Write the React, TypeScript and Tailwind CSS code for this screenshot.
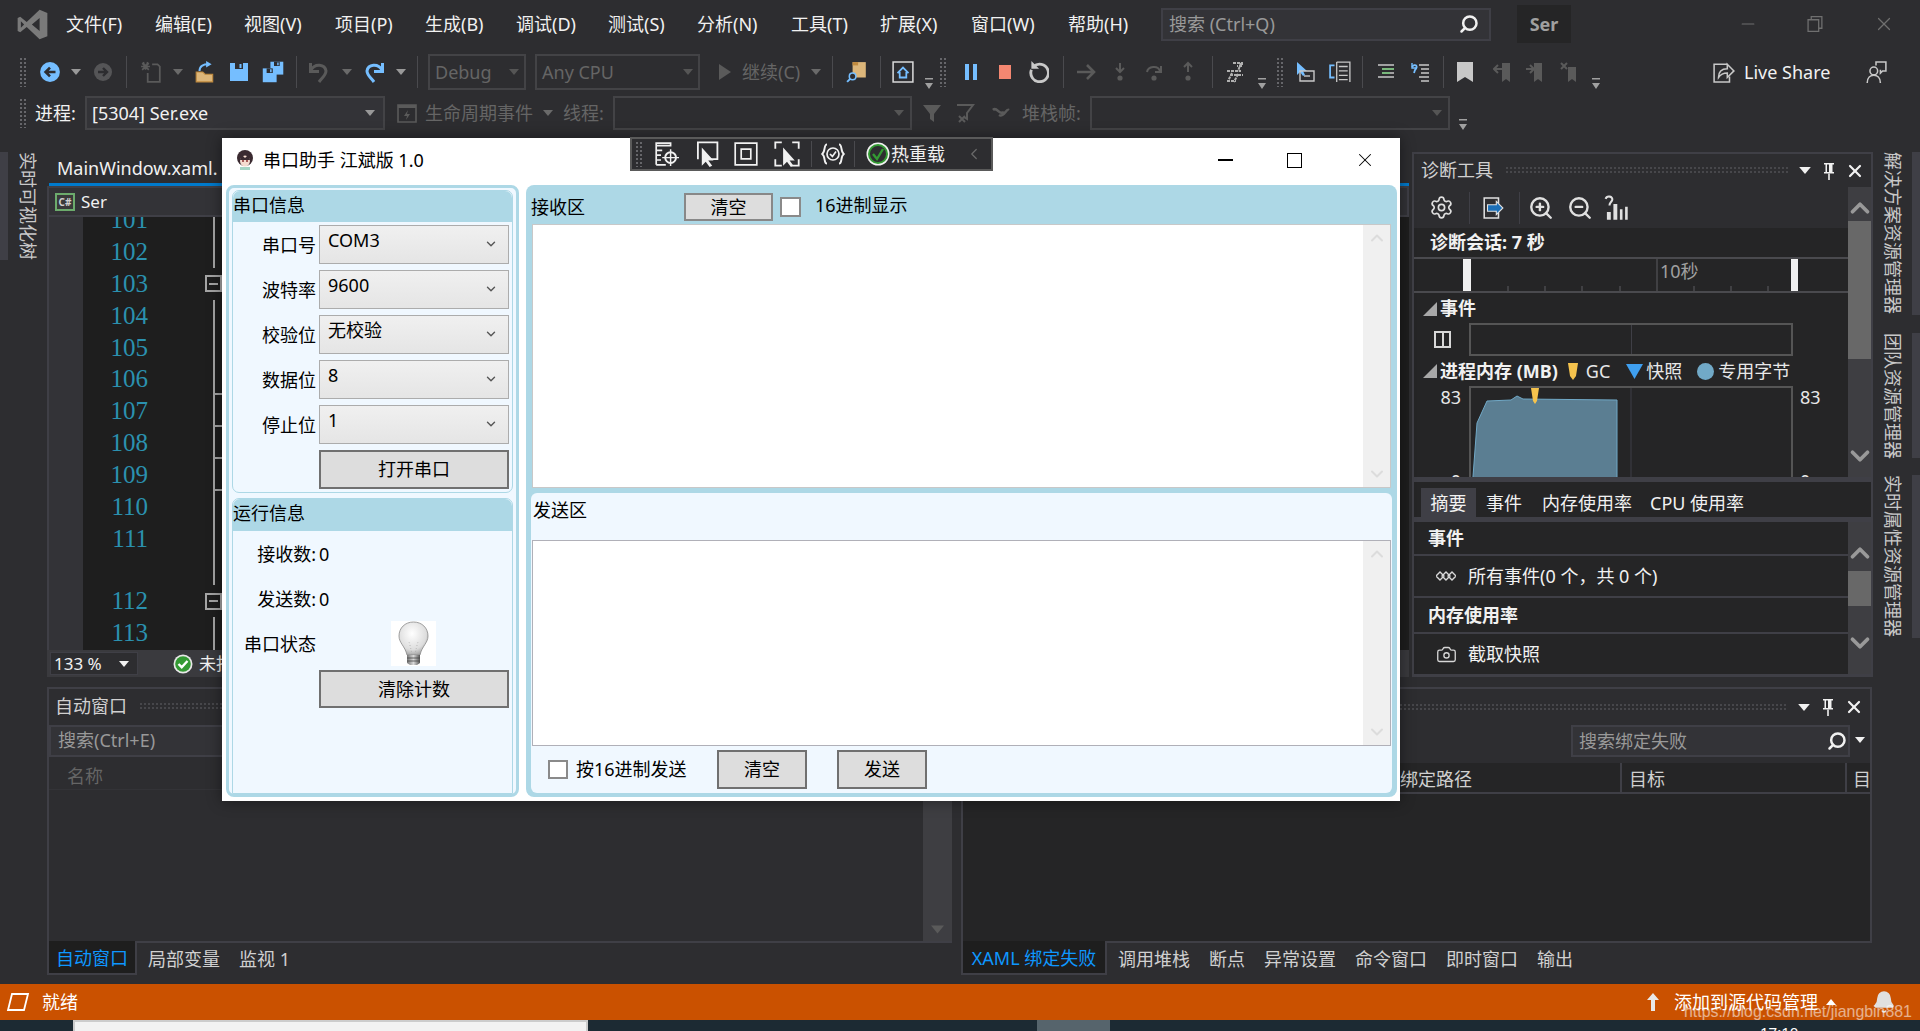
import type { ReactNode } from 'react';
import { Bell, Camera, ChevronDown, ChevronLeft, ChevronUp, Minus, Search, Settings, X, ZoomIn, ZoomOut } from 'lucide-react';

const MENUS = [
  { t: '文件(F)', w: 'w-[89px]' },
  { t: '编辑(E)', w: 'w-[89px]' },
  { t: '视图(V)', w: 'w-[91px]' },
  { t: '项目(P)', w: 'w-[90px]' },
  { t: '生成(B)', w: 'w-[91px]' },
  { t: '调试(D)', w: 'w-[92px]' },
  { t: '测试(S)', w: 'w-[89px]' },
  { t: '分析(N)', w: 'w-[94px]' },
  { t: '工具(T)', w: 'w-[89px]' },
  { t: '扩展(X)', w: 'w-[91px]' },
  { t: '窗口(W)', w: 'w-[97px]' },
  { t: '帮助(H)', w: 'w-[93px]' },
];

function Caret({ className = '', color = '#999999' }: { className?: string; color?: string }) {
  return (
    <svg viewBox="0 0 10 6" className={`w-[10px] h-[6px] shrink-0 ${className}`}>
      <path d="M0 0h10L5 6z" fill={color} />
    </svg>
  );
}

function Overflow({ className = '' }: { className?: string }) {
  return (
    <svg viewBox="0 0 8 13" className={`w-[8px] h-[13px] shrink-0 self-end mb-[6px] ${className}`}>
      <path d="M0 1h8v1.5H0zM0 6h8L4 12z" fill="#a0a0a0" />
    </svg>
  );
}

function Grip({ className = '', h = 'h-[30px]' }: { className?: string; h?: string }) {
  return <div className={`w-[8px] ${h} shrink-0 bg-[radial-gradient(#66666a_1px,transparent_1.2px)] bg-[length:4px_4px] ${className}`} />;
}

function Sep({ className = '' }: { className?: string }) {
  return <div className={`w-[1px] h-[32px] shrink-0 bg-[#4a4a4e] ${className}`} />;
}

function Ic({ w, children, className = '', vb = '0 0 20 20' }: { w: string; children: ReactNode; className?: string; vb?: string }) {
  return (
    <svg viewBox={vb} className={`${w} h-[22px] shrink-0 ${className}`}>
      {children}
    </svg>
  );
}

function Floppy({ x = 0, y = 0, s = 1 }: { x?: number; y?: number; s?: number }) {
  return (
    <g transform={`translate(${x} ${y}) scale(${s})`}>
      <path d="M1 1h18v18H1z" fill="#75beff" />
      <path d="M6 1h8v6H6z" fill="#2d2d30" />
      <path d="M10.5 2h2v4h-2z" fill="#75beff" />
    </g>
  );
}

function Toolbar1() {
  return (
    <div className="h-[48px] flex items-center">
      <Grip className="ml-[19px]" />
      <Ic w="w-[22px]" className="ml-[12px]">
        <circle cx="10" cy="10" r="9" fill="#75beff" />
        <path d="M15 10H7M10 6l-4 4 4 4" stroke="#2d2d30" strokeWidth="2.4" fill="none" />
      </Ic>
      <Caret className="ml-[10px]" />
      <Ic w="w-[20px]" className="ml-[12px]">
        <circle cx="10" cy="10" r="9" fill="#555557" />
        <path d="M5 10h8M10 6l4 4-4 4" stroke="#2d2d30" strokeWidth="2.4" fill="none" />
      </Ic>
      <Sep className="ml-[13px]" />
      <Ic w="w-[22px]" className="ml-[13px]">
        <path d="M3 1l1 3M7 1L6 4M1 5h8M5 3v5M2 2l6 6M8 2L2 8" stroke="#5a5a5a" strokeWidth="1.5" />
        <path d="M11 3h5l2 2v14H7v-8" stroke="#5a5a5a" strokeWidth="1.6" fill="none" />
      </Ic>
      <Caret className="ml-[11px]" color="#6a6a6a" />
      <Ic w="w-[22px]" className="ml-[11px]">
        <path d="M2 19V10h6l2 2h7v7z" fill="#dcb67a" stroke="#c08a3e" />
        <path d="M5 9c0-5 4-6 8-6" stroke="#75beff" strokeWidth="1.8" fill="none" />
        <path d="M11 0l5 3-5 3z" fill="#75beff" />
      </Ic>
      <Ic w="w-[20px]" className="ml-[13px]">
        <Floppy />
      </Ic>
      <Ic w="w-[22px]" className="ml-[13px]">
        <Floppy x={7} y={0} s={0.65} />
        <Floppy x={0} y={6} s={0.7} />
      </Ic>
      <Sep className="ml-[12px]" />
      <Ic w="w-[20px]" className="ml-[11px]">
        <path d="M2.500 1v8.500H11" stroke="#5a5a5a" strokeWidth="3" fill="none" />
        <path d="M3 8C7 1 17 2 18 9c0 4-4 7-7 11" stroke="#5a5a5a" strokeWidth="3" fill="none" />
      </Ic>
      <Caret className="ml-[14px]" color="#6a6a6a" />
      <Ic w="w-[20px]" className="ml-[13px]">
        <path d="M17.500 1v8.500H9" stroke="#75beff" strokeWidth="3" fill="none" />
        <path d="M17 8C13 1 3 2 2 9c0 4 4 7 7 11" stroke="#75beff" strokeWidth="3" fill="none" />
      </Ic>
      <Caret className="ml-[11px]" />
      <Sep className="ml-[11px]" />
      <div className="ml-[10px] w-[98px] h-[36px] shrink-0 border-2 border-[#434346] flex items-center justify-between px-[5px] text-[#656565]">
        <span>Debug</span>
        <Caret color="#555555" />
      </div>
      <div className="ml-[9px] w-[165px] h-[36px] shrink-0 border-2 border-[#434346] flex items-center justify-between px-[5px] text-[#656565]">
        <span>Any CPU</span>
        <Caret color="#555555" />
      </div>
      <Ic w="w-[14px]" className="ml-[18px]" vb="0 0 14 20">
        <path d="M1 2l12 8-12 8z" fill="#5a5a5a" />
      </Ic>
      <span className="ml-[10px] w-[60px] shrink-0 text-[#656565] whitespace-nowrap">继续(C)</span>
      <Caret className="ml-[9px]" color="#6a6a6a" />
      <Sep className="ml-[11px]" />
      <Ic w="w-[22px]" className="ml-[13px]">
        <path d="M6 1h12v14H6z" fill="#dcb67a" />
        <path d="M6 1h5v3H6z" fill="#c08a3e" />
        <circle cx="6" cy="14" r="3" fill="#2d2d30" stroke="#75beff" strokeWidth="1.4" />
        <path d="M4 16l-3 3" stroke="#75beff" strokeWidth="1.8" />
      </Ic>
      <Sep className="ml-[12px]" />
      <Ic w="w-[22px]" className="ml-[11px]">
        <path d="M1 1h18v18H1z" fill="#2d2d30" stroke="#d8d8d8" strokeWidth="1.4" />
        <path d="M5 11l5-5 5 5M7 10v5h6v-5" fill="none" stroke="#75beff" strokeWidth="1.6" />
      </Ic>
      <Overflow className="ml-[11px]" />
      <Grip className="ml-[6px]" />
      <Ic w="w-[14px]" className="ml-[17px]" vb="0 0 14 20">
        <path d="M1 2h4v16H1zM9 2h4v16H9z" fill="#75beff" />
      </Ic>
      <Ic w="w-[14px]" className="ml-[20px]" vb="0 0 14 20">
        <path d="M1 3h12v14H1z" fill="#f48771" />
      </Ic>
      <Ic w="w-[22px]" className="ml-[15px]">
        <path d="M6 5a8 8 0 1 1-2 3" stroke="#c8c8c8" strokeWidth="2.6" fill="none" />
        <path d="M4 0v7h7z" fill="#c8c8c8" />
      </Ic>
      <Sep className="ml-[14px]" />
      <Ic w="w-[20px]" className="ml-[12px]">
        <path d="M1 10h16M11 3l7 7-7 7" stroke="#5a5a5a" strokeWidth="2.6" fill="none" />
      </Ic>
      <Ic w="w-[14px]" className="ml-[17px]" vb="0 0 14 20">
        <path d="M7 1v8M3 6l4 4 4-4" stroke="#5a5a5a" strokeWidth="2" fill="none" />
        <circle cx="7" cy="16" r="2.6" fill="#5a5a5a" />
      </Ic>
      <Ic w="w-[20px]" className="ml-[17px]">
        <path d="M3 10c1-6 11-7 13-1M17 4v6h-6" stroke="#5a5a5a" strokeWidth="2" fill="none" />
        <circle cx="10" cy="16" r="2.6" fill="#5a5a5a" />
      </Ic>
      <Ic w="w-[14px]" className="ml-[17px]" vb="0 0 14 20">
        <path d="M7 10V2M3 5l4-4 4 4" stroke="#5a5a5a" strokeWidth="2" fill="none" />
        <circle cx="7" cy="16" r="2.6" fill="#5a5a5a" />
      </Ic>
      <Sep className="ml-[17px]" />
      <Ic w="w-[20px]" className="ml-[12px]">
        <path d="M8 1h9v3h-5M2 9h14M5 13h13M2 19h9M16 1l-3 8M7 11l-4 8M13 12l-4 8" stroke="#b0b0b0" strokeWidth="2" fill="none" strokeDasharray="3 1" />
      </Ic>
      <Overflow className="ml-[13px]" />
      <Grip className="ml-[10px]" />
      <Ic w="w-[20px]" className="ml-[11px]">
        <path d="M2 0v13l3-3 3 4 2-1-2-4h4z" fill="#75beff" />
        <path d="M5 9h14v10H5z" fill="none" stroke="#c8c8c8" strokeWidth="1.4" />
        <path d="M9 14h6" stroke="#c8c8c8" strokeWidth="1.4" />
      </Ic>
      <Ic w="w-[22px]" className="ml-[14px]">
        <path d="M5 4H1v11h4" stroke="#75beff" strokeWidth="1.6" fill="none" />
        <path d="M7 1h12v18M7 1v18M9 5h8M9 9h8M9 13h8M9 17h8" stroke="#c8c8c8" strokeWidth="1.2" fill="none" />
      </Ic>
      <Sep className="ml-[11px]" />
      <Ic w="w-[20px]" className="ml-[13px]">
        <path d="M2 3h16M6 7h12M6 11h12M2 15h16" stroke="#c8c8c8" strokeWidth="1.6" />
        <path d="M6 7h12M6 11h8" stroke="#6cc070" strokeWidth="1.6" />
      </Ic>
      <Ic w="w-[20px]" className="ml-[14px]">
        <path d="M9 3h10M11 7h8M11 11h8M9 15h10M11 19h8" stroke="#c8c8c8" strokeWidth="1.6" />
        <path d="M2 5c3-4 7-1 3 3L4 11" stroke="#75beff" strokeWidth="1.8" fill="none" />
        <path d="M2 1v5h5" stroke="#75beff" strokeWidth="1.4" fill="none" />
      </Ic>
      <Sep className="ml-[13px]" />
      <Ic w="w-[18px]" className="ml-[12px]" vb="0 0 18 20">
        <path d="M1 0h16v20l-8-5-8 5z" fill="#c8c8c8" />
      </Ic>
      <Ic w="w-[18px]" className="ml-[19px]" vb="0 0 18 20">
        <path d="M9 1h8v19l-4-3-4 3z" fill="#5a5a5a" />
        <path d="M1 7h8M5 3L1 7l4 4" stroke="#5a5a5a" strokeWidth="2" fill="none" />
      </Ic>
      <Ic w="w-[18px]" className="ml-[15px]" vb="0 0 18 20">
        <path d="M8 1h8v19l-4-3-4 3z" fill="#5a5a5a" />
        <path d="M0 7h8M4 3l4 4-4 4" stroke="#5a5a5a" strokeWidth="2" fill="none" />
      </Ic>
      <Ic w="w-[18px]" className="ml-[16px]" vb="0 0 18 20">
        <path d="M8 5h8v15l-4-3-4 3z" fill="#5a5a5a" />
        <path d="M1 1l6 6M7 1L1 7" stroke="#5a5a5a" strokeWidth="2" fill="none" />
      </Ic>
      <Overflow className="ml-[14px]" />
      <Ic w="w-[22px]" className="ml-[113px]">
        <path d="M13 3H1v16h14v-5" stroke="#c8c8c8" strokeWidth="1.4" fill="none" />
        <path d="M5 15c0-6 4-8 8-8V3l6 6-6 6v-4c-3 0-6 1-8 4z" fill="none" stroke="#c8c8c8" strokeWidth="1.4" />
      </Ic>
      <span className="ml-[9px] text-[#f1f1f1] whitespace-nowrap">Live Share</span>
      <Ic w="w-[24px]" className="ml-[34px]">
        <circle cx="8" cy="9" r="3.5" fill="none" stroke="#c8c8c8" strokeWidth="1.4" />
        <path d="M2 20c0-5 3-7 6-7s6 2 6 7" fill="none" stroke="#c8c8c8" strokeWidth="1.4" />
        <path d="M10 4V1h9v8h-3l-2 2V8" fill="none" stroke="#c8c8c8" strokeWidth="1.4" />
      </Ic>
    </div>
  );
}

function Toolbar2() {
  return (
    <div className="h-[42px] flex items-start">
      <Grip className="ml-[19px] mt-[2px]" />
      <span className="ml-[8px] w-[50px] shrink-0 h-[34px] flex items-center text-[#f1f1f1]">进程:</span>
      <div className="w-[300px] h-[34px] shrink-0 bg-[#333337] border-2 border-[#434346] flex items-center justify-between pl-[5px] pr-[8px] text-[#f1f1f1]">
        <span>[5304] Ser.exe</span>
        <Caret />
      </div>
      <div className="h-[34px] flex items-center shrink-0">
        <Ic w="w-[20px]" className="ml-[12px]">
          <path d="M1 2h18v17H1z" fill="none" stroke="#5a5a5a" strokeWidth="1.6" />
          <path d="M1 2h18v3H1z" fill="#5a5a5a" />
          <path d="M11 7l-4 6h3l-1 4 4-6h-3z" fill="#5a5a5a" />
        </Ic>
        <span className="ml-[8px] w-[110px] text-[#656565] whitespace-nowrap">生命周期事件</span>
        <Caret className="ml-[8px]" color="#6a6a6a" />
        <span className="ml-[10px] w-[50px] text-[#656565] whitespace-nowrap">线程:</span>
      </div>
      <div className="w-[299px] h-[34px] shrink-0 border-2 border-[#434346] flex items-center justify-end pr-[6px]">
        <Caret color="#555555" />
      </div>
      <div className="h-[34px] flex items-center shrink-0">
        <Ic w="w-[20px]" className="ml-[10px]">
          <path d="M1 2h18l-7 9v8l-4-3v-5z" fill="#5a5a5a" />
        </Ic>
        <Ic w="w-[20px]" className="ml-[13px]">
          <path d="M2 2h16l-6 8v6l-3-2M4 13l6 6M10 13l-6 6" fill="none" stroke="#5a5a5a" strokeWidth="2" />
        </Ic>
        <Ic w="w-[20px]" className="ml-[16px]">
          <path d="M2 7c4-4 6 6 11 2M18 7c-3-2-5 8-10 5" fill="none" stroke="#5a5a5a" strokeWidth="2.6" />
        </Ic>
        <span className="ml-[11px] w-[58px] text-[#656565] whitespace-nowrap">堆栈帧:</span>
      </div>
      <div className="ml-[10px] w-[360px] h-[34px] shrink-0 border-2 border-[#434346] flex items-center justify-end pr-[6px]">
        <Caret color="#555555" />
      </div>
      <Overflow className="ml-[9px] mb-0 mt-[22px] self-start" />
    </div>
  );
}

function Rail({ items, side }: { items: { t: string; h: string; mt: string }[]; side: 'l' | 'r' }) {
  return (
    <div className="w-[47px] shrink-0 flex flex-col">
      {items.map((it) => (
        <div key={it.t} className={`${it.h} ${it.mt} flex ${side === 'r' ? 'flex-row-reverse' : ''}`}>
          <div className="w-[8px] bg-[#3f3f46]" />
          <div className="flex-1 flex justify-center">
            <span className="[writing-mode:vertical-rl] [text-orientation:sideways] text-[18px] leading-[22px] text-[#c8c8c8] whitespace-nowrap">{it.t}</span>
          </div>
        </div>
      ))}
    </div>
  );
}

const LINES: { n: string; o: 'box' | 'line' | 'tick' | 'none' }[] = [
  { n: '101', o: 'line' },
  { n: '102', o: 'line' },
  { n: '103', o: 'box' },
  { n: '104', o: 'line' },
  { n: '105', o: 'line' },
  { n: '106', o: 'tick' },
  { n: '107', o: 'tick' },
  { n: '108', o: 'tick' },
  { n: '109', o: 'tick' },
  { n: '110', o: 'line' },
  { n: '111', o: 'line' },
  { n: '', o: 'line' },
  { n: '112', o: 'box' },
  { n: '113', o: 'line' },
  { n: ' ', o: 'line' },
];

function Editor() {
  return (
    <div className="w-[1362px] shrink-0 flex flex-col">
      <div className="h-[48px] shrink-0 flex flex-col justify-end ml-[2px]">
        <span className="pl-[8px] pb-[3px] text-[#f1f1f1] leading-[24px] whitespace-nowrap">MainWindow.xaml.</span>
        <div className="h-[3px] bg-[#007acc]" />
      </div>
      <div className="h-[31px] shrink-0 bg-[#333337] border-2 border-[#3f3f46] flex items-center pl-[6px] text-[#f1f1f1]">
        <div className="w-[20px] h-[18px] border-2 border-[#6cab6c] bg-[#3a3a3a] text-[10px] leading-[14px] font-bold text-[#d0d0d0] text-center">C#</div>
        <span className="ml-[6px] text-[17px]">Ser</span>
      </div>
      <div className="flex-1 min-h-0 flex overflow-hidden border-l-[2px] border-[#3f3f46]">
        <div className="w-[34px] bg-[#333337] shrink-0" />
        <div className="flex-1 bg-[#1e1e1e] overflow-hidden">
          <div className="-mt-[13px]">
            {LINES.map((l, i) => (
              <div key={i} className={`flex ${l.n === '' ? 'h-[30.5px]' : 'h-[31.9px]'}`}>
                <div className="w-[65px] text-right text-[25px] leading-[32px] text-[#2b91af] [font-family:'Liberation_Serif',serif]">{l.n}</div>
                <div className="ml-[57px] w-[17px] relative flex justify-center">
                  {l.o === 'box' ? (
                    <div className="self-center w-[17px] h-[17px] border-2 border-[#a5a5a5] bg-[#1e1e1e] flex items-center justify-center">
                      <div className="w-[9px] h-[2px] bg-[#a5a5a5]" />
                    </div>
                  ) : (
                    <div className="w-[2px] bg-[#a5a5a5]" />
                  )}
                  {l.o === 'tick' && <div className="absolute left-[9px] bottom-0 w-[8px] h-[2px] bg-[#a5a5a5]" />}
                </div>
              </div>
            ))}
          </div>
        </div>
      </div>
      <div className="h-[27px] shrink-0 bg-[#3a3a3e] flex items-center pl-[3px] text-[#f1f1f1]">
        <div className="w-[88px] h-[23px] bg-[#2d2d30] border border-[#3f3f46] flex items-center justify-between px-[3px] text-[17px]">
          <span>133 %</span>
          <Caret className="mr-[5px]" color="#f1f1f1" />
        </div>
        <svg viewBox="0 0 20 20" className="w-[20px] h-[20px] ml-[35px] shrink-0">
          <circle cx="10" cy="10" r="9.5" fill="#e8e8e8" />
          <circle cx="10" cy="10" r="7.8" fill="#339933" />
          <path d="M5.5 10l3.2 3.2L14.5 7" stroke="#fff" strokeWidth="2.4" fill="none" />
        </svg>
        <span className="ml-[6px] text-[17px]">未找到相关问题</span>
      </div>
    </div>
  );
}

function ScrollChevron({ up }: { up: boolean }) {
  const Icon = up ? ChevronUp : ChevronDown;
  return <Icon className="w-[30px] h-[30px] shrink-0 text-[#999999] -mx-[4px]" strokeWidth={3} />;
}

function Dots({ className = '' }: { className?: string }) {
  return <div className={`h-[9px] bg-[radial-gradient(#47474b_1px,transparent_1.2px)] bg-[length:4px_4px] ${className}`} />;
}

function TitleActions() {
  return (
    <div className="flex items-center shrink-0 w-[72px] ml-[11px]">
      <Caret className="w-[12px] h-[7px]" color="#f1f1f1" />
      <svg viewBox="0 0 12 18" className="w-[12px] h-[18px] ml-[12px] shrink-0">
        <path d="M1 1h10v1.500H9.500V10H11v1.500H1V10h1.500V2.500H1zM4 2.500V10h2V2.500z" fill="#f1f1f1" fillRule="evenodd" />
        <path d="M5.200 11.500h1.600V18H5.200z" fill="#f1f1f1" />
      </svg>
      <X className="w-[20px] h-[20px] ml-[10px] text-[#f1f1f1]" strokeWidth={2.6} />
    </div>
  );
}

function Diagnostics() {
  return (
    <div className="w-[461px] shrink-0 ml-[3px] mt-[14px] mb-0 flex flex-col border-l-2 border-r-2 border-t-2 border-b-[3px] border-[#3f3f46] bg-[#2d2d30]">
      <div className="h-[33px] shrink-0 flex items-center pl-[7px] text-[#d0d0d0]">
        <span className="w-[84px] shrink-0 whitespace-nowrap">诊断工具</span>
        <Dots className="flex-1" />
        <TitleActions />
      </div>
      <div className="h-[290px] shrink-0 flex">
        <div className="w-[434px] shrink-0 flex flex-col overflow-hidden bg-[#252526]">
          <div className="h-[41px] shrink-0 bg-[#2d2d30] flex items-center">
            <Settings className="ml-[15px] w-[25px] h-[25px] text-[#e0e0e0]" strokeWidth={1.6} />
            <div className="ml-[15px] w-[1px] h-[32px] bg-[#3f3f46]" />
            <Ic w="w-[26px]" className="ml-[10px]">
              <path d="M15 6V1H2v18h13v-5" stroke="#e0e0e0" strokeWidth="1.4" fill="none" />
              <path d="M5 7h8V4l6 6-6 6v-3H5z" fill="#1b6fb8" stroke="#e0e0e0" strokeWidth="1" />
            </Ic>
            <div className="ml-[13px] w-[1px] h-[32px] bg-[#3f3f46]" />
            <ZoomIn className="ml-[8px] w-[26px] h-[26px] text-[#e0e0e0]" strokeWidth={2.2} />
            <ZoomOut className="ml-[13px] w-[26px] h-[26px] text-[#e0e0e0]" strokeWidth={2.2} />
            <Ic w="w-[26px]" className="ml-[10px] !h-[26px]">
              <path d="M2 3c1-3 6-2 5 1-1 2-2 2-2 4" stroke="#e0e0e0" strokeWidth="1.6" fill="none" />
              <path d="M8 7h3v12H8zM13 11h2v8h-2zM17 9h2v10h-2zM3 13h3v6H3z" fill="#e0e0e0" />
            </Ic>
          </div>
          <div className="h-[29px] shrink-0 flex items-center pl-[16px] font-bold text-[#f1f1f1] whitespace-nowrap">诊断会话: 7 秒</div>
          <div className="h-[2px] shrink-0 bg-[#4a4a4e]" />
          <div className="h-[32px] shrink-0 relative">
            <svg viewBox="0 0 434 32" className="absolute inset-0 w-[434px] h-[32px]">
              <path d="M243 0v32" stroke="#4a4a4e" strokeWidth="1.5" />
              <path d="M94 27v5M131 27v5M168 27v5M206 27v5M280 27v5M317 27v5M354 27v5" stroke="#4a4a4e" strokeWidth="1.5" />
              <path d="M49 0h8v32h-8zM377 0h7v32h-7z" fill="#f1f1f1" />
            </svg>
            <span className="absolute left-[246px] top-[1px] text-[#a0a0a0] leading-[22px]">10秒</span>
          </div>
          <div className="h-[2px] shrink-0 bg-[#4a4a4e]" />
          <div className="h-[30px] shrink-0 flex items-center pl-[9px] pt-[1px]">
            <svg viewBox="0 0 14 14" className="w-[14px] h-[14px]">
              <path d="M14 0v14H0z" fill="#a8a8a8" />
            </svg>
            <span className="ml-[3px] font-bold text-[#f1f1f1]">事件</span>
          </div>
          <div className="h-[33px] shrink-0 flex">
            <div className="w-[55px] flex items-center justify-center">
              <div className="ml-[2px] w-[17px] h-[17px] border-2 border-[#d8d8d8] flex justify-center">
                <div className="w-[2px] bg-[#d8d8d8]" />
              </div>
            </div>
            <div className="w-[324px] border-2 border-[#555555] flex justify-center">
              <div className="w-[1px] bg-[#3f3f46]" />
            </div>
          </div>
          <div className="h-[30px] shrink-0 flex items-center pl-[9px] text-[#e8e8e8] whitespace-nowrap">
            <svg viewBox="0 0 14 14" className="w-[14px] h-[14px] shrink-0">
              <path d="M14 0v14H0z" fill="#a8a8a8" />
            </svg>
            <span className="ml-[3px] font-bold text-[#f1f1f1]">进程内存 (MB)</span>
            <svg viewBox="0 0 10 17" className="ml-[10px] w-[10px] h-[17px] shrink-0">
              <path d="M0 0h10l-2 13-3 4-3-4z" fill="#f5c34d" />
            </svg>
            <span className="ml-[8px]">GC</span>
            <svg viewBox="0 0 17 15" className="ml-[16px] w-[17px] h-[15px] shrink-0">
              <path d="M0 0h17l-8.5 15z" fill="#3f9ff0" />
            </svg>
            <span className="ml-[3px]">快照</span>
            <div className="ml-[15px] w-[17px] h-[17px] rounded-full bg-[#71a9c7] shrink-0" />
            <span className="ml-[4px]">专用字节</span>
          </div>
          <div className="h-[106px] shrink-0 flex">
            <div className="w-[47px] shrink-0 flex flex-col justify-between items-end text-[#e8e8e8] leading-[22px]">
              <span>83</span>
              <span>0</span>
            </div>
            <div className="ml-[8px] w-[324px] h-[106px] border-2 border-[#555555] relative shrink-0">
              <svg viewBox="0 0 320 102" className="absolute inset-0 w-[320px] h-[102px]">
                <path d="M160 0v102" stroke="#3f3f46" />
                <path d="M1 102L6 35 16 13 40 12 46 8 52 11 146 12V102z" fill="#5b7e92" stroke="#71a9c7" strokeWidth="1" />
                <path d="M60 0h8l-2 13-2 3-2-3z" fill="#f5c34d" />
              </svg>
            </div>
            <div className="ml-[7px] w-[40px] flex flex-col justify-between text-[#e8e8e8] leading-[22px]">
              <span>83</span>
              <span>0</span>
            </div>
          </div>
        </div>
        <div className="w-[23px] shrink-0 bg-[#3e3e42] flex flex-col items-center pt-[6px]">
          <ScrollChevron up />
          <div className="w-[23px] h-[138px] bg-[#686868] -mt-[2px]" />
          <div className="flex-1" />
          <div className="mb-[6px]">
            <ScrollChevron up={false} />
          </div>
        </div>
      </div>
      <div className="h-[5px] shrink-0 bg-[#3f3f46]" />
      <div className="h-[35px] shrink-0 bg-[#252526] flex items-end pl-[7px] text-[#f1f1f1]">
        <div className="w-[55px] h-[29px] bg-[#3f3f46] flex items-center justify-center pt-[2px]">摘要</div>
        <div className="h-[29px] ml-[10px] flex items-center pt-[2px]">事件</div>
        <div className="h-[29px] ml-[20px] flex items-center pt-[2px]">内存使用率</div>
        <div className="h-[29px] ml-[18px] flex items-center pt-[2px]">CPU 使用率</div>
      </div>
      <div className="h-[5px] shrink-0 bg-[#3f3f46]" />
      <div className="flex-1 min-h-0 flex">
        <div className="w-[434px] shrink-0 flex flex-col bg-[#252526] text-[#f1f1f1]">
          <div className="h-[34px] flex items-center pl-[14px] font-bold border-b-2 border-[#3f3f46]">事件</div>
          <div className="h-[42px] flex items-center pl-[22px] border-b-2 border-[#3f3f46]">
            <svg viewBox="0 0 20 10" className="w-[20px] h-[10px]">
              <path d="M4 1l4 4-4 4-4-4zM10 1l4 4-4 4-4-4zM16 1l4 4-4 4-4-4z" fill="none" stroke="#d8d8d8" strokeWidth="1.4" />
            </svg>
            <span className="ml-[12px]">所有事件(0 个，共 0 个)</span>
          </div>
          <div className="h-[36px] flex items-center pl-[14px] font-bold border-b-2 border-[#3f3f46]">内存使用率</div>
          <div className="flex-1 flex items-center pl-[22px]">
            <Camera className="w-[21px] h-[21px] text-[#d8d8d8]" strokeWidth={1.5} />
            <span className="ml-[11px]">截取快照</span>
          </div>
        </div>
        <div className="w-[23px] shrink-0 flex flex-col items-center pt-[16px] bg-[#3e3e42]">
          <ScrollChevron up />
          <div className="w-[23px] h-[35px] bg-[#686868] mt-[3px]" />
          <div className="mt-[22px]">
            <ScrollChevron up={false} />
          </div>
        </div>
      </div>
    </div>
  );
}

function LeftBottom() {
  return (
    <div className="w-[905px] shrink-0 flex flex-col">
      <div className="flex-1 min-h-0 flex flex-col border-l-2 border-t-2 border-[#3f3f46]">
        <div className="h-[36px] shrink-0 flex items-center pl-[6px] pb-[2px] text-[#d0d0d0] bg-[#2d2d30]">
          <span className="w-[84px] shrink-0">自动窗口</span>
          <Dots className="flex-1 mr-[4px]" />
        </div>
        <div className="h-[32px] shrink-0 bg-[#333337] border-2 border-[#3f3f46] flex items-center pl-[7px] pb-[2px] text-[#999999]">搜索(Ctrl+E)</div>
        <div className="flex-1 min-h-0 flex bg-[#2d2d30]">
          <div className="flex-1">
            <div className="h-[33px] flex items-center pl-[18px] pt-[6px] text-[#656565] border-b border-[#333337]">名称</div>
          </div>
          <div className="w-[29px] shrink-0 bg-[#3e3e42] flex flex-col justify-end items-center pb-[6px]">
            <Caret className="w-[13px] h-[11px]" color="#5a5a5a" />
          </div>
        </div>
      </div>
      <div className="h-[2px] shrink-0 bg-[#3f3f46]" />
      <div className="h-[32px] shrink-0 flex items-stretch text-[#d0d0d0]">
        <div className="-mt-[2px] w-[90px] bg-[#1e1e1e] border-l-2 border-r-2 border-b-2 border-[#3f3f46] flex items-center justify-center pt-[2px] text-[#0e97ff]">自动窗口</div>
        <div className="ml-[11px] flex items-center">局部变量</div>
        <div className="ml-[19px] flex items-center">监视 1</div>
      </div>
    </div>
  );
}

function RightBottom() {
  return (
    <div className="w-[911px] shrink-0 ml-[9px] flex flex-col">
      <div className="flex-1 min-h-0 flex flex-col border-l-2 border-t-2 border-r-2 border-b-2 border-[#3f3f46] bg-[#252526]">
        <div className="h-[36px] shrink-0 flex items-center bg-[#2d2d30]">
          <Dots className="flex-1" />
          <TitleActions />
        </div>
        <div className="h-[38px] shrink-0 bg-[#2d2d30] flex items-start justify-end pr-0 text-[#999999]">
          <div className="w-[279px] h-[32px] bg-[#333337] border-2 border-[#3f3f46] flex items-center justify-between pl-[6px] pr-[1px]">
            <span>搜索绑定失败</span>
            <Search className="w-[20px] h-[20px] -scale-x-100 text-[#f1f1f1]" strokeWidth={3} />
          </div>
          <Caret className="mx-[5px] mt-[12px]" color="#f1f1f1" />
        </div>
        <div className="h-[31px] shrink-0 flex items-stretch text-[#d0d0d0] border-b-2 border-[#3f3f46] whitespace-nowrap overflow-hidden">
          <div className="w-[657px] flex items-center justify-end pt-[3px] shrink-0">
            <span className="w-[220px]">绑定路径</span>
          </div>
          <div className="w-[225px] border-l-2 border-[#3f3f46] flex items-center pl-[7px] pt-[3px] shrink-0">目标</div>
          <div className="border-l-2 border-[#3f3f46] flex items-center pl-[6px] pt-[3px]">目标类型</div>
        </div>
      </div>
      <div className="h-[32px] shrink-0 flex items-stretch text-[#d0d0d0] whitespace-nowrap">
        <div className="-mt-[2px] w-[146px] bg-[#1e1e1e] border-l-2 border-r-2 border-b-2 border-[#3f3f46] flex items-center justify-center pt-[2px] text-[#0e97ff]">XAML 绑定失败</div>
        <div className="ml-[11px] flex items-center">调用堆栈</div>
        <div className="ml-[19px] flex items-center">断点</div>
        <div className="ml-[19px] flex items-center">异常设置</div>
        <div className="ml-[19px] flex items-center">命令窗口</div>
        <div className="ml-[19px] flex items-center">即时窗口</div>
        <div className="ml-[19px] flex items-center">输出</div>
      </div>
    </div>
  );
}

function Combo({ value }: { value: string }) {
  return (
    <div className="w-[190px] h-[39px] shrink-0 border border-[#acacac] bg-gradient-to-b from-[#f0f0f0] to-[#e5e5e5] flex justify-between pl-[8px] pr-[10px]">
      <span className="leading-[28px] text-[18px]">{value}</span>
      <ChevronDown className="w-[14px] h-[14px] self-center -mt-[1px] text-[#555555]" strokeWidth={2.4} />
    </div>
  );
}

function WpfButton({ label, className = '' }: { label: string; className?: string }) {
  return <div className={`shrink-0 border-2 border-[#707070] bg-[#dddddd] flex items-center justify-center ${className}`}>{label}</div>;
}

function ScrollCol() {
  return (
    <div className="w-[27px] shrink-0 bg-[#f0f0f0] flex flex-col justify-between items-center">
      <div className="h-[26px] w-full bg-[#f0f0f0] flex items-center justify-center">
        <ChevronUp className="w-[20px] h-[20px] text-[#dcdcdc]" strokeWidth={2.4} />
      </div>
      <div className="h-[26px] w-full bg-[#f0f0f0] flex items-center justify-center">
        <ChevronDown className="w-[20px] h-[20px] text-[#dcdcdc]" strokeWidth={2.4} />
      </div>
    </div>
  );
}

function Bulb() {
  return (
    <svg viewBox="0 0 45 45" className="w-[45px] h-[45px] shrink-0 bg-white">
      <defs>
        <radialGradient id="glass" cx="0.45" cy="0.35" r="0.7">
          <stop offset="0" stopColor="#ffffff" />
          <stop offset="0.7" stopColor="#dddddd" />
          <stop offset="1" stopColor="#9a9a9a" />
        </radialGradient>
        <linearGradient id="screw" x1="0" x2="1" y1="0" y2="0">
          <stop offset="0" stopColor="#777" />
          <stop offset="0.5" stopColor="#d8d8d8" />
          <stop offset="1" stopColor="#555" />
        </linearGradient>
      </defs>
      <path d="M22.5 1C14 1 8 7 8 15c0 7 6 10 8 19h13c2-9 8-12 8-19 0-8-6-14-14.500-14z" fill="url(#glass)" stroke="#8a8a8a" strokeWidth="0.8" />
      <path d="M21 34c-1-6-2-10-3-13M24 34c1-6 2-10 3-13" stroke="#999" strokeWidth="0.6" strokeDasharray="1 2" fill="none" />
      <path d="M16 34h13v8l-3 2h-7l-3-2z" fill="url(#screw)" />
      <path d="M16 37h13M16 40h13" stroke="#444" strokeWidth="0.8" />
    </svg>
  );
}

const SERIAL_ROWS = [
  { l: '串口号', v: 'COM3' },
  { l: '波特率', v: '9600' },
  { l: '校验位', v: '无校验' },
  { l: '数据位', v: '8' },
  { l: '停止位', v: '1' },
];

function SerialWindow() {
  return (
    <div className="absolute left-[222px] top-[138px] w-[1178px] h-[663px] bg-white text-black shadow-[0_0_14px_rgba(0,0,0,0.45)] flex flex-col text-[18px]">
      <div className="h-[47px] shrink-0 flex items-center pl-[13px] pb-[3px]">
        <svg viewBox="0 0 20 20" className="w-[20px] h-[20px] shrink-0">
          <circle cx="10" cy="8" r="8" fill="#3a2a30" />
          <ellipse cx="10" cy="11" rx="5" ry="5.500" fill="#f5dcd0" />
          <path d="M6 4l4 4 4-4 1 6H5z" fill="#3a2a30" />
          <circle cx="8" cy="11" r="1" fill="#8a3030" />
          <circle cx="12" cy="11" r="1" fill="#8a3030" />
          <path d="M5 17h10v3H5z" fill="#a5d5c5" />
        </svg>
        <span className="ml-[8px] whitespace-nowrap">串口助手 江斌版 1.0</span>
        <div className="ml-auto flex items-center">
          <div className="w-[15px] h-[1.5px] bg-black" />
          <div className="ml-[54px] w-[15px] h-[15px] border-[1.5px] border-black" />
          <X className="ml-[52px] mr-[24px] w-[22px] h-[22px]" strokeWidth={1.1} />
        </div>
      </div>
      <div className="h-[612px] shrink-0 flex pl-[4px]">
        <div className="w-[293px] shrink-0 border-[3px] border-[#add8e6] rounded-[8px] bg-[#f0f8ff] px-[3px] pt-[2px] flex flex-col gap-[5px]">
          <div className="h-[303px] shrink-0 border border-[#add8e6] rounded-[7px] flex flex-col">
            <div className="h-[31px] shrink-0 bg-[#add8e6] rounded-t-[7px] flex items-center pb-[2px]">串口信息</div>
            <div className="flex flex-col gap-[6px] pt-[3px]">
              {SERIAL_ROWS.map((r) => (
                <div key={r.l} className="flex items-center">
                  <span className="w-[83px] shrink-0 text-right pt-[2px]">{r.l}</span>
                  <div className="ml-[3px]">
                    <Combo value={r.v} />
                  </div>
                </div>
              ))}
              <WpfButton label="打开串口" className="ml-[86px] w-[190px] h-[39px]" />
            </div>
          </div>
          <div className="flex-1 min-h-0 border border-[#add8e6] rounded-t-[7px] flex flex-col">
            <div className="h-[32px] shrink-0 bg-[#add8e6] rounded-t-[7px] flex items-center pb-[4px]">运行信息</div>
            <div className="flex flex-col gap-[6px] pt-[3px]">
              <div className="h-[39px] flex items-center pt-[2px]">
                <span className="w-[83px] shrink-0 text-right">接收数:</span>
                <span className="ml-[3px]">0</span>
              </div>
              <div className="h-[39px] flex items-center pt-[2px]">
                <span className="w-[83px] shrink-0 text-right">发送数:</span>
                <span className="ml-[3px]">0</span>
              </div>
              <div className="h-[39px] flex items-center">
                <span className="w-[83px] shrink-0 text-right whitespace-nowrap pt-[2px]">串口状态</span>
                <div className="ml-[75px]">
                  <Bulb />
                </div>
              </div>
              <WpfButton label="清除计数" className="ml-[86px] mt-[1px] w-[190px] h-[38px]" />
            </div>
          </div>
        </div>
        <div className="ml-[7px] w-[871px] shrink-0 bg-[#add8e6] rounded-[8px] px-[5px] pb-[4px] flex flex-col">
          <div className="h-[39px] shrink-0 flex items-center pt-[4px]">
            <span className="w-[153px] shrink-0 pt-[2px]">接收区</span>
            <WpfButton label="清空" className="w-[89px] h-[28px] border-[#888888] pt-[2px]" />
            <div className="ml-[7px] w-[21px] h-[20px] bg-white border-2 border-[#8a8a8a] shrink-0" />
            <span className="ml-[14px] -mt-[3px]">16进制显示</span>
          </div>
          <div className="h-[264px] shrink-0 mx-[1px] bg-white border border-[#c8c8c8] flex justify-end">
            <ScrollCol />
          </div>
          <div className="mt-[5px] flex-1 min-h-0 rounded-[6px] bg-[#f0f8ff] flex flex-col">
            <div className="h-[47px] shrink-0 pl-[2px] pt-[4px] leading-[26px]">发送区</div>
            <div className="h-[206px] shrink-0 mx-[1px] bg-white border border-[#b0b0b8] flex justify-end">
              <ScrollCol />
            </div>
            <div className="flex-1 min-h-0 flex items-center pl-[17px] -mt-[1px]">
              <div className="w-[20px] h-[19px] bg-white border-2 border-[#8a8a8a] shrink-0" />
              <span className="ml-[8px] w-[141px] shrink-0 whitespace-nowrap">按16进制发送</span>
              <WpfButton label="清空" className="w-[90px] h-[39px]" />
              <WpfButton label="发送" className="ml-[30px] w-[90px] h-[39px]" />
            </div>
          </div>
        </div>
      </div>
    </div>
  );
}

function HotReloadBar() {
  return (
    <div className="absolute left-[630px] top-[137px] w-[363px] h-[34px] bg-[#2d2d30] border-2 border-[#5a5a5a] flex items-center text-[#f1f1f1] text-[18px]">
      <Grip className="ml-[3px]" h="h-[26px]" />
      <Ic w="w-[24px]" className="ml-[12px] !h-[28px]">
        <path d="M1 1h12v2H1zM1 3v16M1 7h5M1 11h4M1 15h4M1 19h8" stroke="#f1f1f1" strokeWidth="1.4" fill="none" />
        <circle cx="13" cy="13" r="4.500" fill="none" stroke="#f1f1f1" strokeWidth="1.6" />
        <path d="M13 6v14M6 13h14" stroke="#f1f1f1" strokeWidth="1.2" />
      </Ic>
      <Ic w="w-[26px]" className="ml-[15px] !h-[28px]">
        <path d="M3 14V1h15v13h-6" stroke="#f1f1f1" strokeWidth="1.4" fill="none" />
        <path d="M6 5v14l3-3 3 4 2-1-3-4h4z" fill="#f1f1f1" />
      </Ic>
      <Ic w="w-[24px]" className="ml-[14px] !h-[28px]">
        <path d="M1 1h18v18H1zM6 6h8v8H6z" stroke="#f1f1f1" strokeWidth="1.4" fill="none" />
      </Ic>
      <Ic w="w-[26px]" className="ml-[16px] !h-[28px]">
        <path d="M1 6V1h5M14 1h5v5M19 14v5h-5M1 14v5h5" stroke="#f1f1f1" strokeWidth="1.4" fill="none" />
        <path d="M7 5v14l3-3 3 4 2-1-3-4h4z" fill="#f1f1f1" />
      </Ic>
      <div className="ml-[11px] w-[1px] h-[26px] bg-[#4a4a4e]" />
      <Ic w="w-[24px]" className="ml-[9px] !h-[26px]">
        <path d="M5 2C2 2 4 8 1 10c3 2 1 8 4 8M15 2c3 0 1 6 4 8-3 2-1 8-4 8" stroke="#f1f1f1" strokeWidth="1.6" fill="none" />
        <circle cx="10" cy="10" r="5" fill="none" stroke="#f1f1f1" strokeWidth="1.4" />
        <path d="M7.500 10l2 2 3-4" stroke="#f1f1f1" strokeWidth="1.4" fill="none" />
      </Ic>
      <div className="ml-[9px] w-[1px] h-[26px] bg-[#4a4a4e]" />
      <svg viewBox="0 0 24 24" className="ml-[11px] w-[24px] h-[24px] shrink-0">
        <circle cx="12" cy="12" r="11.500" fill="#f1f1f1" />
        <circle cx="12" cy="12" r="9" fill="#2d2d30" stroke="#339933" strokeWidth="2" />
        <path d="M7 12l4 5 6-10" stroke="#339933" strokeWidth="2.4" fill="none" />
      </svg>
      <span className="ml-[1px] whitespace-nowrap">热重载</span>
      <ChevronLeft className="ml-[20px] w-[18px] h-[22px] text-[#6a6a6a]" strokeWidth={1.6} />
    </div>
  );
}

export default function App() {
  return (
    <div className="relative w-[1920px] h-[1031px] overflow-hidden bg-[#2d2d30] text-[18px] text-[#f1f1f1] [font-family:'Noto_Sans','Noto_Sans_CJK_SC',sans-serif]">
      <div className="h-[48px] flex items-center">
        <svg viewBox="0 0 24 24" className="ml-[17px] w-[31px] h-[31px] shrink-0">
          <path fillRule="evenodd" d="M17.500.5L23.500 3v18l-6 2.500L7.500 14l-5 4-2-1V7l2-1 5 4zM17.500 7l-6 5 6 5zM3 9.500v5L5.500 12z" fill="#7a7a7a" />
        </svg>
        <div className="ml-[18px] flex">
          {MENUS.map((m) => (
            <span key={m.t} className={`${m.w} shrink-0 whitespace-nowrap`}>
              {m.t}
            </span>
          ))}
        </div>
        <div className="w-[330px] h-[33px] shrink-0 bg-[#333337] border-2 border-[#3f3f46] flex items-center justify-between pl-[6px] pr-[10px] text-[#999999]">
          <span>搜索 (Ctrl+Q)</span>
          <Search className="w-[20px] h-[20px] -scale-x-100 text-[#f1f1f1]" strokeWidth={3} />
        </div>
        <div className="ml-[26px] w-[54px] h-[38px] shrink-0 bg-[#252526] flex items-center justify-center font-bold text-[#a0a0a0]">Ser</div>
        <Minus className="ml-[167px] w-[20px] h-[20px] text-[#6f6f6f]" strokeWidth={1.4} />
        <svg viewBox="0 0 16 16" className="ml-[49px] w-[17px] h-[20px] shrink-0">
          <path d="M1 4h10v11H1zM4 4V1h10v11h-3" fill="none" stroke="#6f6f6f" strokeWidth="1.2" />
        </svg>
        <X className="ml-[49px] w-[22px] h-[22px] text-[#6f6f6f]" strokeWidth={1.3} />
      </div>
      <Toolbar1 />
      <Toolbar2 />

      <div className="h-[846px] flex">
        <Rail side="l" items={[{ t: '实时可视化树', h: 'h-[108px]', mt: 'mt-[14px]' }]} />
        <div className="w-[1826px] shrink-0 flex flex-col">
          <div className="h-[539px] shrink-0 flex">
            <Editor />
            <Diagnostics />
          </div>
          <div className="mt-[10px] h-[288px] shrink-0 flex">
            <LeftBottom />
            <RightBottom />
          </div>
        </div>
        <Rail
          side="r"
          items={[
            { t: '解决方案资源管理器', h: 'h-[163px]', mt: 'mt-[14px]' },
            { t: '团队资源管理器', h: 'h-[125px]', mt: 'mt-[18px]' },
            { t: '实时属性资源管理器', h: 'h-[163px]', mt: 'mt-[17px]' },
          ]}
        />
      </div>

      <div className="h-[36px] bg-[#ca5100] flex items-center text-white">
        <svg viewBox="0 0 24 20" className="ml-[6px] w-[24px] h-[20px] shrink-0">
          <path d="M6 2h16l-4 16H2z" fill="none" stroke="#ffffff" strokeWidth="1.8" />
        </svg>
        <span className="ml-[12px]">就绪</span>
        <div className="ml-auto flex items-center">
          <svg viewBox="0 0 14 20" className="w-[14px] h-[20px] shrink-0">
            <path d="M7 1l6 7H9v11H5V8H1z" fill="#e8e8e8" />
          </svg>
          <span className="ml-[14px] whitespace-nowrap">添加到源代码管理</span>
          <Caret className="ml-[8px] rotate-180" color="#ffffff" />
          <Bell className="ml-[36px] mr-[24px] w-[24px] h-[24px] text-[#e0e0e0]" fill="#e0e0e0" strokeWidth={1.5} />
        </div>
      </div>
      <div className="h-[11px] bg-[#1c2a33] flex overflow-hidden">
        <div className="ml-[73px] w-[515px] bg-[#f2f2f2] border-t-[2px] border-x-[2px] border-[#cccccc]" />
        <div className="ml-[449px] w-[73px] bg-[#56646c]" />
        <span className="ml-[650px] pt-[3px] text-[15px] leading-[18px] text-white">17:10</span>
      </div>

      <SerialWindow />
      <HotReloadBar />
      <div className="absolute left-[1684px] top-[1001px] text-[15.9px] leading-[22px] text-white/55 whitespace-nowrap [font-family:'Liberation_Sans',sans-serif]">
        https://blog.csdn.net/jiangbin881
      </div>
    </div>
  );
}
